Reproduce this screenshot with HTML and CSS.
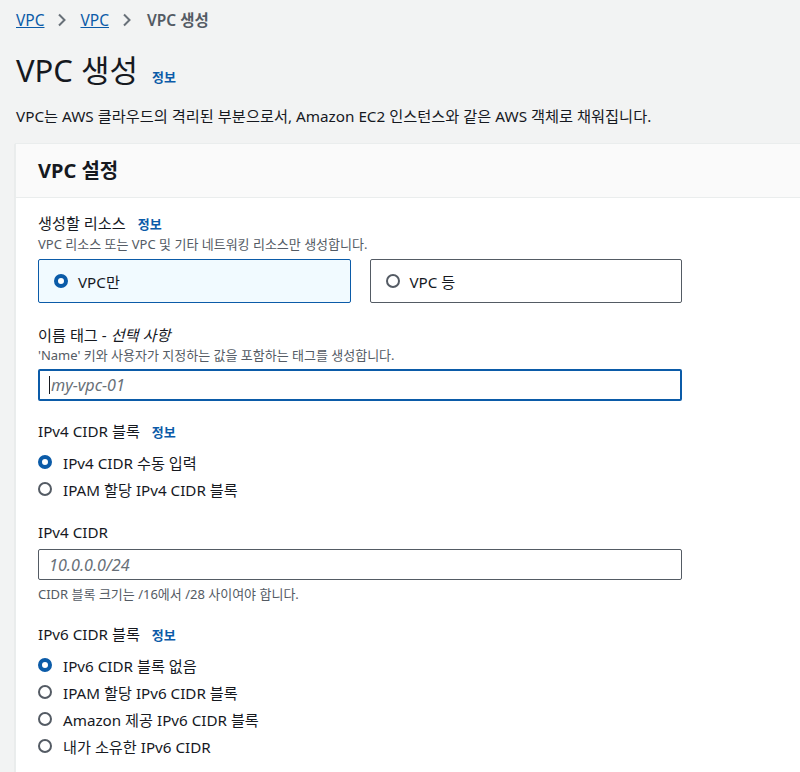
FILE: index.html
```html
<!DOCTYPE html>
<html lang="ko">
<head>
<meta charset="utf-8">
<title>VPC 생성</title>
<link rel="stylesheet" href="styles.css">
</head>
<body>
<div class="page">
  <nav class="crumbs">
    <a href="#" class="crumb-link">VPC</a>
    <svg class="sep" width="10" height="14" viewBox="0 0 10 14"><path d="M2 1.5 L7.5 7 L2 12.5" fill="none" stroke="#687078" stroke-width="2"/></svg>
    <a href="#" class="crumb-link">VPC</a>
    <svg class="sep" width="10" height="14" viewBox="0 0 10 14"><path d="M2 1.5 L7.5 7 L2 12.5" fill="none" stroke="#687078" stroke-width="2"/></svg>
    <span class="crumb-current">VPC 생성</span>
  </nav>

  <div class="title-row">
    <h1 class="title">VPC 생성</h1>
    <a href="#" class="info">정보</a>
  </div>
  <p class="page-desc">VPC는 AWS 클라우드의 격리된 부분으로서, Amazon EC2 인스턴스와 같은 AWS 객체로 채워집니다.</p>

  <section class="card">
    <header class="card-head"><h2 class="card-title">VPC 설정</h2></header>
    <div class="card-body">
      <div class="field">
        <div class="label">생성할 리소스 <a href="#" class="info">정보</a></div>
        <div class="hint">VPC 리소스 또는 VPC 및 기타 네트워킹 리소스만 생성합니다.</div>
        <div class="tiles">
          <div class="tile tile-on"><span class="radio radio-on"></span><span>VPC만</span></div>
          <div class="tile"><span class="radio"></span><span>VPC 등</span></div>
        </div>
      </div>

      <div class="field f-name">
        <div class="label">이름 태그 - <em>선택 사항</em></div>
        <div class="hint">'Name' 키와 사용자가 지정하는 값을 포함하는 태그를 생성합니다.</div>
        <div class="input input-focus"><span class="caret"></span><span class="ph">my-vpc-01</span></div>
      </div>

      <div class="field f-v4">
        <div class="label">IPv4 CIDR 블록 <a href="#" class="info">정보</a></div>
        <div class="radios">
          <div class="opt"><span class="radio radio-on"></span><span>IPv4 CIDR 수동 입력</span></div>
          <div class="opt"><span class="radio"></span><span>IPAM 할당 IPv4 CIDR 블록</span></div>
        </div>
      </div>

      <div class="field f-cidr">
        <div class="label">IPv4 CIDR</div>
        <div class="input input-cidr"><span class="ph">10.0.0.0/24</span></div>
        <div class="hint hint-after">CIDR 블록 크기는 /16에서 /28 사이여야 합니다.</div>
      </div>

      <div class="field f-v6">
        <div class="label">IPv6 CIDR 블록 <a href="#" class="info">정보</a></div>
        <div class="radios">
          <div class="opt"><span class="radio radio-on"></span><span>IPv6 CIDR 블록 없음</span></div>
          <div class="opt"><span class="radio"></span><span>IPAM 할당 IPv6 CIDR 블록</span></div>
          <div class="opt"><span class="radio"></span><span>Amazon 제공 IPv6 CIDR 블록</span></div>
          <div class="opt"><span class="radio"></span><span>내가 소유한 IPv6 CIDR</span></div>
        </div>
      </div>
    </div>
  </section>
</div>
</body>
</html>
```

FILE: styles.css
```css
html, body {
  margin: 0;
  padding: 0;
  overflow: hidden;
  background: #f2f3f3;
}
body {
  font-family: "Noto Sans", "Noto Sans CJK KR", sans-serif;
  color: #16191f;
  font-size: 15px;
}
.page {
  padding: 10px 0 0 16px;
  width: 900px;
}
.crumbs {
  display: flex;
  align-items: center;
  gap: 13px;
  height: 20px;
  font-size: 15.5px;
  line-height: 20px;
}
.crumb-link {
  color: #0b5ba8;
  text-decoration: underline;
}
.sep { display: block; }
.crumb-current {
  color: #545b64;
  font-weight: 600;
  margin-left: 2px;
}
.title-row {
  display: flex;
  align-items: baseline;
  gap: 14px;
  margin-top: 20px;
  height: 40px;
}
.title {
  margin: 0;
  font-size: 31px;
  line-height: 40px;
  font-weight: 400;
}
.info {
  color: #0b5ba8;
  font-size: 13px;
  font-weight: 700;
  text-decoration: none;
  margin-left: 8px;
}
.title-row .info { margin-left: 0; }
.page-desc {
  margin: 16px 0 0;
  font-size: 15.25px;
  line-height: 20px;
}
.card {
  margin: 17px 0 0 -1px;
  background: #fff;
  border: 1px solid #eaeded;
  box-shadow: 0 1px 1px rgba(0,28,36,0.2);
}
.card-head {
  background: #fafafa;
  border-bottom: 1px solid #eaeded;
  height: 53px;
  padding: 0 22px;
  display: flex;
  align-items: center;
}
.card-title {
  margin: 0;
  font-size: 20px;
  font-weight: 700;
  line-height: 24px;
}
.card-body {
  padding: 15px 22px 60px;
  width: 644px;
}
.field { display: flex; flex-direction: column; }
.label {
  font-size: 15.2px;
  line-height: 20px;
}
.label em { font-style: italic; }
.hint {
  margin-top: 2px;
  font-size: 13px;
  line-height: 16px;
  color: #545b64;
}
.hint-after { margin-top: 6px; }
.tiles {
  margin-top: 7px;
  display: grid;
  grid-template-columns: 1fr 1fr;
  gap: 19px;
}
.tile {
  height: 44px;
  box-sizing: border-box;
  border: 1px solid #545b64;
  border-radius: 2px;
  display: flex;
  align-items: center;
  gap: 10px;
  padding-left: 15px;
  font-size: 15.2px;
}
.tile-on {
  background: #f1faff;
  border-color: #0b5ba8;
}
.radio {
  width: 14px;
  height: 14px;
  box-sizing: border-box;
  border-radius: 50%;
  border: 2px solid #545b64;
  background: #fff;
  flex: none;
}
.radio-on {
  border: 4.5px solid #0b5ba8;
}
.f-name { margin-top: 22px; }
.input {
  margin-top: 6px;
  height: 32px;
  box-sizing: border-box;
  border: 1px solid #545b64;
  border-radius: 2px;
  display: flex;
  align-items: center;
  padding-left: 10px;
  background: #fff;
}
.input-focus {
  border: 2px solid #0b5ba8;
  padding-left: 9px;
}
.caret {
  width: 1px;
  height: 18px;
  background: #16191f;
  margin-right: 1px;
}
.ph {
  font-style: italic;
  color: #687078;
  font-size: 16.2px;
}
.f-v4 { margin-top: 20px; }
.radios {
  margin-top: 6px;
  display: flex;
  flex-direction: column;
}
.opt {
  height: 27px;
  display: flex;
  align-items: center;
  gap: 11px;
  font-size: 15.2px;
}
.f-cidr { margin-top: 20px; }
.input-cidr { margin-top: 7px; height: 31px; }
.f-v6 { margin-top: 22px; }
```
